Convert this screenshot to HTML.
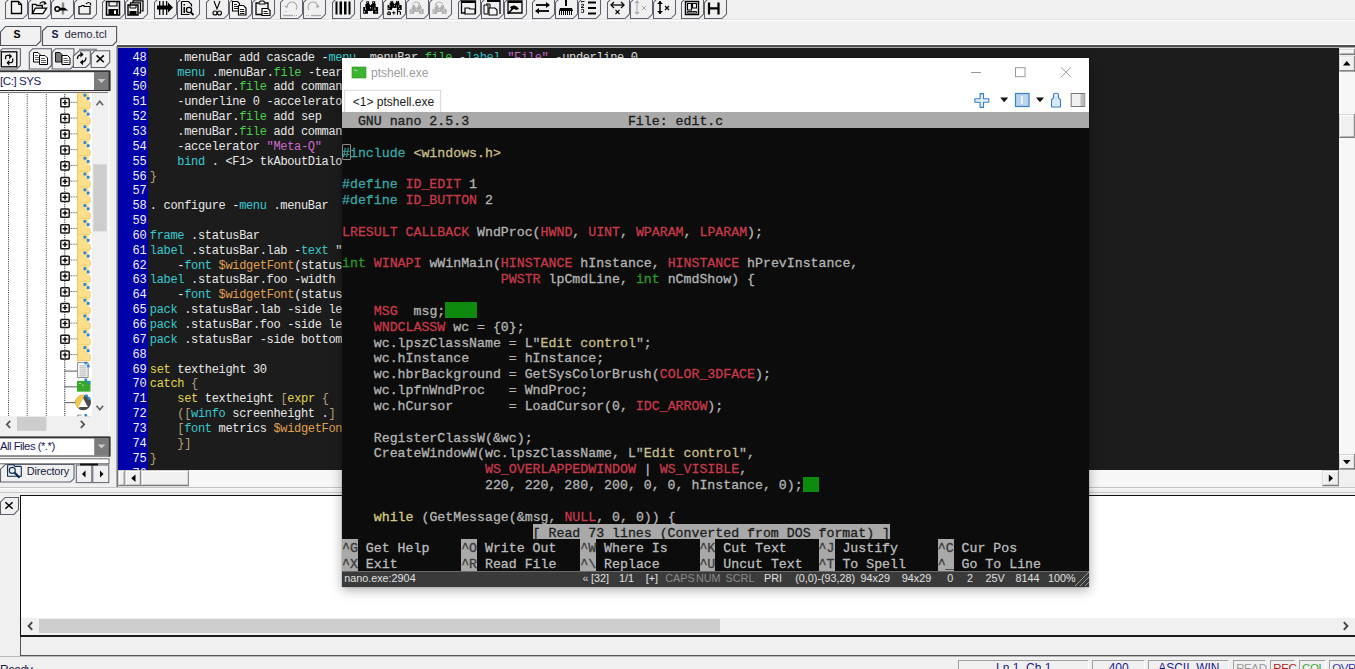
<!DOCTYPE html>
<html><head><meta charset="utf-8"><style>
html,body{margin:0;padding:0}
body{width:1355px;height:669px;overflow:hidden;position:relative;background:#f0f0f0;font-family:"Liberation Sans",sans-serif}
.a{position:absolute}
.mono{font-family:"Liberation Mono",monospace;white-space:pre}
</style></head><body>
<svg width="740" height="22" style="position:absolute;left:0;top:0">
<polygon points="5.5,18.5 5.5,2.5 8.5,-0.5 27.5,-0.5 27.5,14.0 23.0,18.5" fill="#f0f0f0" stroke="#5e626e" stroke-width="1.05"/>
<g transform="translate(5,0)"><path d="M6.5,1.5 h7 l3,3 v9 h-10z" fill="#f4f4f4" stroke="#000" stroke-width="1.3"/><path d="M13.5,1.5 v3 h3" fill="none" stroke="#000" stroke-width="1"/></g>
<polygon points="28.5,18.5 28.5,2.5 31.5,-0.5 50.5,-0.5 50.5,14.0 46.0,18.5" fill="#f0f0f0" stroke="#5e626e" stroke-width="1.05"/>
<g transform="translate(28,0)"><path d="M4.4,13.6 V4.4 h3.4 l1.1,1.1 h5.4 v2.6" fill="none" stroke="#000" stroke-width="1.3"/><path d="M4.4,13.6 l3,-5.4 h11.2 l-3.6,5.4z" fill="#fff" stroke="#000" stroke-width="1.3"/><path d="M11.8,3.6 q2.6,-2.8 5.6,-1" fill="none" stroke="#000" stroke-width="1.2"/><path d="M16.2,1.2 l2.8,2.8 -3.4,0.8z" fill="#000"/></g>
<polygon points="51.5,18.5 51.5,2.5 54.5,-0.5 73.5,-0.5 73.5,14.0 69.0,18.5" fill="#f0f0f0" stroke="#5e626e" stroke-width="1.05"/>
<g transform="translate(51,0)"><rect x="10.8" y="2.5" width="2.4" height="12" fill="#8a8a8a"/><circle cx="6.3" cy="9" r="2.3" fill="none" stroke="#000" stroke-width="1.5"/><path d="M8.6,7.8 h5 l3.6,2.6 h-8.6z" fill="#000"/></g>
<polygon points="74.5,18.5 74.5,2.5 77.5,-0.5 96.5,-0.5 96.5,14.0 92.0,18.5" fill="#f0f0f0" stroke="#5e626e" stroke-width="1.05"/>
<g transform="translate(74,0)"><path d="M5,14 v-7.5 h2 l1,-1 h2 v1 h6 v7.5z" fill="none" stroke="#000" stroke-width="1.2"/><path d="M12,4 q3,-3 5,0" fill="none" stroke="#000" stroke-width="1.1"/><path d="M16.5,3 l1,2.5 -2,-0.5z" fill="#000"/></g>
<polygon points="102.5,18.5 102.5,2.5 105.5,-0.5 124.5,-0.5 124.5,14.0 120.0,18.5" fill="#f0f0f0" stroke="#5e626e" stroke-width="1.05"/>
<g transform="translate(102,0)"><path d="M4.5,1.5 h13 v13.5 h-13z" fill="none" stroke="#000" stroke-width="1.5"/><path d="M7,1.5 v4.5 h8 v-4.5" fill="none" stroke="#000" stroke-width="1.1"/><rect x="6.5" y="9" width="9.5" height="6" fill="#000"/><rect x="12" y="10.5" width="2" height="3.5" fill="#fff"/></g>
<polygon points="125.5,18.5 125.5,2.5 128.5,-0.5 147.5,-0.5 147.5,14.0 143.0,18.5" fill="#f0f0f0" stroke="#5e626e" stroke-width="1.05"/>
<g transform="translate(125,0)"><path d="M8,3 v-2.2 h10 v10 h-1.5" fill="none" stroke="#000" stroke-width="1.2"/><path d="M5.5,5 v-2.2 h10 v10 h-1.5" fill="none" stroke="#000" stroke-width="1.2"/><path d="M3,5 h10 v10 h-10z" fill="#f0f0f0" stroke="#000" stroke-width="1.4"/><path d="M5,5 v3 h6 v-3" fill="none" stroke="#000" stroke-width="1"/><rect x="4.5" y="11" width="7" height="4" fill="#000"/></g>
<polygon points="154.5,18.5 154.5,2.5 157.5,-0.5 176.5,-0.5 176.5,14.0 172.0,18.5" fill="#f0f0f0" stroke="#5e626e" stroke-width="1.05"/>
<g transform="translate(154,0)"><path d="M3,5.5 h11 v-3 l5,5 -5,5 v-3 h-11z" fill="#000"/><rect x="5" y="1" width="1.3" height="14" fill="#000"/><rect x="8.5" y="1" width="1.3" height="14" fill="#000"/><rect x="12" y="1" width="1.3" height="14" fill="#000"/></g>
<polygon points="177.5,18.5 177.5,2.5 180.5,-0.5 199.5,-0.5 199.5,14.0 195.0,18.5" fill="#f0f0f0" stroke="#5e626e" stroke-width="1.05"/>
<g transform="translate(177,0)"><path d="M4.5,1.5 h7 l3,3 v2" fill="none" stroke="#000" stroke-width="1.2"/><path d="M4.5,1.5 v13 h8" fill="none" stroke="#000" stroke-width="1.2"/><rect x="6.5" y="4" width="1.5" height="1.5" fill="#000"/><rect x="6.5" y="7" width="1.5" height="6" fill="#000"/><circle cx="12" cy="10" r="2.6" fill="none" stroke="#000" stroke-width="1.3"/><path d="M13.5,12 l3,3" stroke="#000" stroke-width="1.8"/></g>
<polygon points="206.5,18.5 206.5,2.5 209.5,-0.5 228.5,-0.5 228.5,14.0 224.0,18.5" fill="#f0f0f0" stroke="#5e626e" stroke-width="1.05"/>
<g transform="translate(206,0)"><path d="M8,1 l3,8 3,-8" fill="none" stroke="#000" stroke-width="1.1"/><circle cx="9" cy="13" r="2" fill="none" stroke="#000" stroke-width="1.1"/><circle cx="13.5" cy="13" r="2" fill="none" stroke="#000" stroke-width="1.1"/></g>
<polygon points="229.5,18.5 229.5,2.5 232.5,-0.5 251.5,-0.5 251.5,14.0 247.0,18.5" fill="#f0f0f0" stroke="#5e626e" stroke-width="1.05"/>
<g transform="translate(229,0)"><path d="M3.5,1.5 h5 l2,2 v7.5 h-7z" fill="#fff" stroke="#000" stroke-width="1.1"/><path d="M5,4.5h3M5,6.5h4M5,8.5h4" stroke="#000" stroke-width="0.9"/><path d="M9.5,5.5 h5 l2.5,2.5 v7 h-7.5z" fill="#fff" stroke="#000" stroke-width="1.2"/><path d="M11,9.5h4M11,11.5h4.5M11,13.5h4.5" stroke="#000" stroke-width="0.9"/></g>
<polygon points="252.5,18.5 252.5,2.5 255.5,-0.5 274.5,-0.5 274.5,14.0 270.0,18.5" fill="#f0f0f0" stroke="#5e626e" stroke-width="1.05"/>
<g transform="translate(252,0)"><path d="M6.5,3 h-2.5 v11.5 h6" fill="none" stroke="#000" stroke-width="1.3"/><path d="M13.5,3 h2.5 v5" fill="none" stroke="#000" stroke-width="1.3"/><path d="M7,4 v-1.5 l1.5,-1.5 h3 l1.5,1.5 v1.5z" fill="#fff" stroke="#000" stroke-width="1.1"/><path d="M10,8.5 h6 l2,2 v5 h-8z" fill="#fff" stroke="#000" stroke-width="1.2"/><path d="M11.5,11.5h4M11.5,13.5h5" stroke="#000" stroke-width="0.9"/></g>
<polygon points="280.5,18.5 280.5,2.5 283.5,-0.5 302.5,-0.5 302.5,14.0 298.0,18.5" fill="#f0f0f0" stroke="#5e626e" stroke-width="1.05"/>
<g transform="translate(280,0)"><path d="M6,12 v-1 M16,10 a5,5 0 1 0 -9,-3" fill="none" stroke="#aaa" stroke-width="1.1"/><path d="M4,6 l3,2.5 1,-3z" fill="#aaa"/><path d="M3,15.5 h10" stroke="#aaa" stroke-width="1.3"/><path d="M14,15.5 h3" stroke="#aaa" stroke-width="1" stroke-dasharray="1,1"/></g>
<polygon points="303.5,18.5 303.5,2.5 306.5,-0.5 325.5,-0.5 325.5,14.0 321.0,18.5" fill="#f0f0f0" stroke="#5e626e" stroke-width="1.05"/>
<g transform="translate(303,0)"><path d="M6,10 a5,5 0 1 1 9,-3" fill="none" stroke="#aaa" stroke-width="1.1"/><path d="M17,6 l-3,2.5 -1,-3z" fill="#aaa"/><path d="M8,15.5 h10" stroke="#aaa" stroke-width="1.3"/><path d="M3,15.5 h4" stroke="#aaa" stroke-width="1" stroke-dasharray="1,1"/></g>
<polygon points="332.5,18.5 332.5,2.5 335.5,-0.5 354.5,-0.5 354.5,14.0 350.0,18.5" fill="#f0f0f0" stroke="#5e626e" stroke-width="1.05"/>
<g transform="translate(332,0)"><rect x="3.5" y="1.5" width="2" height="13" fill="#000"/><rect x="7.5" y="1.5" width="2.5" height="13" fill="#000"/><rect x="12" y="1.5" width="2.5" height="13" fill="#000"/><rect x="16.5" y="1.5" width="2" height="13" fill="#000"/></g>
<polygon points="360.5,18.5 360.5,2.5 363.5,-0.5 382.5,-0.5 382.5,14.0 378.0,18.5" fill="#f0f0f0" stroke="#5e626e" stroke-width="1.05"/>
<g transform="translate(360,0)"><g fill="#000"><rect x="3.2" y="7" width="4.8" height="6.8"/><rect x="5.4" y="3.9" width="4.4" height="3.3"/><rect x="6.3" y="1.3" width="2.8" height="2.8"/><rect x="8" y="5.2" width="4.8" height="5.8"/><rect x="12.2" y="1.3" width="3" height="2.8"/><rect x="11.3" y="3.9" width="4.4" height="3.3"/><rect x="13" y="7" width="5.1" height="6.8"/></g><g fill="#f0f0f0"><rect x="5.1" y="7.5" width="0.8" height="2.2"/><rect x="4.2" y="11" width="0.8" height="1.6"/><rect x="10" y="7" width="0.8" height="1.5"/><rect x="14.6" y="7.5" width="0.8" height="2.2"/><rect x="15.6" y="11" width="0.8" height="1.6"/><rect x="7.3" y="2" width="0.8" height="0.8"/><rect x="13.2" y="2" width="0.8" height="0.8"/></g></g>
<polygon points="383.5,18.5 383.5,2.5 386.5,-0.5 405.5,-0.5 405.5,14.0 401.0,18.5" fill="#f0f0f0" stroke="#5e626e" stroke-width="1.05"/>
<g transform="translate(383,0)"><g transform="translate(1.5,0) scale(0.95,0.72)"><g fill="#000"><rect x="3.2" y="7" width="4.8" height="6.8"/><rect x="5.4" y="3.9" width="4.4" height="3.3"/><rect x="6.3" y="1.3" width="2.8" height="2.8"/><rect x="8" y="5.2" width="4.8" height="5.8"/><rect x="12.2" y="1.3" width="3" height="2.8"/><rect x="11.3" y="3.9" width="4.4" height="3.3"/><rect x="13" y="7" width="5.1" height="6.8"/></g><g fill="#f0f0f0"><rect x="5.1" y="7.5" width="0.8" height="2.2"/><rect x="4.2" y="11" width="0.8" height="1.6"/><rect x="10" y="7" width="0.8" height="1.5"/><rect x="14.6" y="7.5" width="0.8" height="2.2"/><rect x="15.6" y="11" width="0.8" height="1.6"/><rect x="7.3" y="2" width="0.8" height="0.8"/><rect x="13.2" y="2" width="0.8" height="0.8"/></g></g><path d="M4.5,12.3 q1.5,-1.2 3,0 v2.3 h-2.5 q-0.8,0 -0.8,-0.8 q0,-0.8 0.8,-0.8 h2.5" fill="none" stroke="#000" stroke-width="1"/><path d="M9.2,12.8 h3.2 M10.8,11.2 v3.2" stroke="#000" stroke-width="1.1"/><path d="M14.5,9.8 v5 M14.5,12 q0,-0.8 1.5,-0.8 q1.4,0 1.4,1 v2.6" fill="none" stroke="#000" stroke-width="1.1"/></g>
<polygon points="406.5,18.5 406.5,2.5 409.5,-0.5 428.5,-0.5 428.5,14.0 424.0,18.5" fill="#f0f0f0" stroke="#5e626e" stroke-width="1.05"/>
<g transform="translate(406,0)"><g transform="translate(0.5,4) scale(0.95,0.72)"><g fill="#b0b0b0"><rect x="3.2" y="7" width="4.8" height="6.8"/><rect x="5.4" y="3.9" width="4.4" height="3.3"/><rect x="6.3" y="1.3" width="2.8" height="2.8"/><rect x="8" y="5.2" width="4.8" height="5.8"/><rect x="12.2" y="1.3" width="3" height="2.8"/><rect x="11.3" y="3.9" width="4.4" height="3.3"/><rect x="13" y="7" width="5.1" height="6.8"/></g><g fill="#f0f0f0"><rect x="5.1" y="7.5" width="0.8" height="2.2"/><rect x="4.2" y="11" width="0.8" height="1.6"/><rect x="10" y="7" width="0.8" height="1.5"/><rect x="14.6" y="7.5" width="0.8" height="2.2"/><rect x="15.6" y="11" width="0.8" height="1.6"/><rect x="7.3" y="2" width="0.8" height="0.8"/><rect x="13.2" y="2" width="0.8" height="0.8"/></g></g><path d="M6.5,4 q3.5,-4 7.5,0" fill="none" stroke="#b0b0b0" stroke-width="1"/><path d="M13,2.5 l1.5,2 -2.2,0.3z" fill="#b0b0b0"/></g>
<polygon points="429.5,18.5 429.5,2.5 432.5,-0.5 451.5,-0.5 451.5,14.0 447.0,18.5" fill="#f0f0f0" stroke="#5e626e" stroke-width="1.05"/>
<g transform="translate(429,0)"><g transform="translate(0.5,4) scale(0.95,0.72)"><g fill="#b0b0b0"><rect x="3.2" y="7" width="4.8" height="6.8"/><rect x="5.4" y="3.9" width="4.4" height="3.3"/><rect x="6.3" y="1.3" width="2.8" height="2.8"/><rect x="8" y="5.2" width="4.8" height="5.8"/><rect x="12.2" y="1.3" width="3" height="2.8"/><rect x="11.3" y="3.9" width="4.4" height="3.3"/><rect x="13" y="7" width="5.1" height="6.8"/></g><g fill="#f0f0f0"><rect x="5.1" y="7.5" width="0.8" height="2.2"/><rect x="4.2" y="11" width="0.8" height="1.6"/><rect x="10" y="7" width="0.8" height="1.5"/><rect x="14.6" y="7.5" width="0.8" height="2.2"/><rect x="15.6" y="11" width="0.8" height="1.6"/><rect x="7.3" y="2" width="0.8" height="0.8"/><rect x="13.2" y="2" width="0.8" height="0.8"/></g></g><path d="M6.5,4 q3.5,-4 7.5,0" fill="none" stroke="#b0b0b0" stroke-width="1"/><path d="M7,2.5 l-1.5,2 2.2,0.3z" fill="#b0b0b0"/></g>
<polygon points="458.5,18.5 458.5,2.5 461.5,-0.5 480.5,-0.5 480.5,14.0 476.0,18.5" fill="#f0f0f0" stroke="#5e626e" stroke-width="1.05"/>
<g transform="translate(458,0)"><path d="M3.5,1 h14 v12 h-14z" fill="none" stroke="#000" stroke-width="1.3"/><rect x="3.5" y="1" width="14" height="2" fill="#000"/><path d="M7,14 v-6 h4 l1,1 h5 v5z" fill="#f4f4f4" stroke="#000" stroke-width="1.2"/></g>
<polygon points="481.5,18.5 481.5,2.5 484.5,-0.5 503.5,-0.5 503.5,14.0 499.0,18.5" fill="#f0f0f0" stroke="#5e626e" stroke-width="1.05"/>
<g transform="translate(481,0)"><path d="M6,0 h13 v14" fill="none" stroke="#000" stroke-width="1.3"/><rect x="6" y="-1" width="13" height="3" fill="#000"/><path d="M3,5 h4 v9 h-4z M5,4 h4 v9" fill="none" stroke="#000" stroke-width="1"/><path d="M8,8 h6 l2,2 v5 h-8z" fill="#f4f4f4" stroke="#000" stroke-width="1.1"/></g>
<polygon points="504.5,18.5 504.5,2.5 507.5,-0.5 526.5,-0.5 526.5,14.0 522.0,18.5" fill="#f0f0f0" stroke="#5e626e" stroke-width="1.05"/>
<g transform="translate(504,0)"><path d="M4,1 h14 v12 h-14z" fill="none" stroke="#000" stroke-width="1.3"/><rect x="4" y="1" width="14" height="2" fill="#000"/><path d="M6,7 q5,-4 9,2 l-3,1 q-2,-2 -4,0z" fill="#000"/><path d="M9,8 l-5,6" stroke="#000" stroke-width="1.6"/></g>
<polygon points="532.5,18.5 532.5,2.5 535.5,-0.5 554.5,-0.5 554.5,14.0 550.0,18.5" fill="#f0f0f0" stroke="#5e626e" stroke-width="1.05"/>
<g transform="translate(532,0)"><path d="M4,5 h11" stroke="#000" stroke-width="1.8"/><path d="M14,2 l4,3 -4,3z" fill="#000"/><path d="M6,11 h11" stroke="#000" stroke-width="1.8"/><path d="M7,8 l-4,3 4,3z" fill="#000"/></g>
<polygon points="555.5,18.5 555.5,2.5 558.5,-0.5 577.5,-0.5 577.5,14.0 573.0,18.5" fill="#f0f0f0" stroke="#5e626e" stroke-width="1.05"/>
<g transform="translate(555,0)"><rect x="10" y="0" width="2" height="6" fill="#000"/><path d="M5,8 h12 l1,3 h-14z" fill="#000"/><path d="M4.5,11 v4 M6.5,11 v4 M8.5,11 v4 M10.5,11 v4 M12.5,11 v4 M14.5,11 v4 M16.5,11 v4" stroke="#000" stroke-width="1"/></g>
<polygon points="578.5,18.5 578.5,2.5 581.5,-0.5 600.5,-0.5 600.5,14.0 596.0,18.5" fill="#f0f0f0" stroke="#5e626e" stroke-width="1.05"/>
<g transform="translate(578,0)"><path d="M10,2.5 h8 M10,8 h8 M10,13.5 h8" stroke="#000" stroke-width="2"/><path d="M3.5,1.5 h3 M3.5,1.5 v1" stroke="#000" stroke-width="0.9"/><path d="M3,5 q1.5,-1.5 3,0 l-3,2.5 h3" fill="none" stroke="#000" stroke-width="0.9"/><path d="M3,10 q1.5,-1.2 3,0 q-1.5,1 0,2 q-1.5,1.3 -3,0" fill="none" stroke="#000" stroke-width="0.9"/></g>
<polygon points="607.5,18.5 607.5,2.5 610.5,-0.5 629.5,-0.5 629.5,14.0 625.0,18.5" fill="#f0f0f0" stroke="#5e626e" stroke-width="1.05"/>
<g transform="translate(607,0)"><path d="M4,5 h13" stroke="#000" stroke-width="1.3"/><path d="M7,2 l-3,3 3,3 M14,2 l3,3 -3,3" fill="none" stroke="#000" stroke-width="1.3"/><path d="M8.5,10 l4,4 M12.5,10 l-4,4" stroke="#000" stroke-width="1.1"/></g>
<polygon points="630.5,18.5 630.5,2.5 633.5,-0.5 652.5,-0.5 652.5,14.0 648.0,18.5" fill="#f0f0f0" stroke="#5e626e" stroke-width="1.05"/>
<g transform="translate(630,0)"><path d="M7,1 v13 M5,3 l2,-2 2,2 M5,12 l2,2 2,-2" fill="none" stroke="#aaa" stroke-width="1.1"/><path d="M12,6 l4,4 M16,6 l-4,4" stroke="#aaa" stroke-width="1"/></g>
<polygon points="653.5,18.5 653.5,2.5 656.5,-0.5 675.5,-0.5 675.5,14.0 671.0,18.5" fill="#f0f0f0" stroke="#5e626e" stroke-width="1.05"/>
<g transform="translate(653,0)"><path d="M7,1 v13" stroke="#000" stroke-width="1.5"/><path d="M4,4 l3,-3 3,3z M4,11 l3,3 3,-3z" fill="#000"/><path d="M12,6 l4,4 M16,6 l-4,4" stroke="#000" stroke-width="1.1"/></g>
<polygon points="681.5,18.5 681.5,2.5 684.5,-0.5 703.5,-0.5 703.5,14.0 699.0,18.5" fill="#f0f0f0" stroke="#5e626e" stroke-width="1.05"/>
<g transform="translate(681,0)"><path d="M4.5,1.5 h13 v13 h-13z" fill="none" stroke="#000" stroke-width="1.4"/><path d="M6.5,3.5 h4 v6.5 h-4z M11.5,3.5 h4 v4.5 h-4z" fill="none" stroke="#000" stroke-width="1.1"/><path d="M6.5,11.5 h9 v1.5 h-9z" fill="none" stroke="#000" stroke-width="0.9"/></g>
<polygon points="704.5,18.5 704.5,2.5 707.5,-0.5 726.5,-0.5 726.5,14.0 722.0,18.5" fill="#f0f0f0" stroke="#5e626e" stroke-width="1.05"/>
<g transform="translate(704,0)"><path d="M5,2.5 v12 M14.5,2.5 v12 M5,8.3 h9.5" stroke="#000" stroke-width="2.2"/></g>
</svg>
<div style="position:absolute;left:0;top:19px;width:1355px;height:1px;background:#e2e2e2"></div>
<div style="position:absolute;left:0;top:20px;width:1355px;height:1px;background:#fff"></div>
<svg width="130" height="48" style="position:absolute;left:0;top:0">
<polygon points="0.5,45.5 0.5,32 5.5,26.5 40.8,26.5 40.8,41 36.3,45.5" fill="#f0f0f0" stroke="#50545e" stroke-width="1.1"/>
<polygon points="42.5,45.5 42.5,31 47,26.5 116.6,26.5 116.6,41.5 112.6,45.5" fill="#f0f0f0" stroke="#50545e" stroke-width="1.1"/>
<text x="13.6" y="37.5" font-family="Liberation Sans" font-weight="bold" font-size="10.5" fill="#000">S</text>
<text x="51.5" y="37.5" font-family="Liberation Sans" font-weight="bold" font-size="10.5" fill="#102050">S</text>
<text x="64.5" y="37.6" font-family="Liberation Sans" font-size="11.2" fill="#2a2a40">demo.tcl</text>
</svg>
<svg width="118" height="492" style="position:absolute;left:0;top:0">
<polygon points="-1,69 -1,52.2 2.5,48.7 20.4,48.7 20.4,65.5 16.9,69" fill="#f0f0f0" stroke="#5e626e" stroke-width="1.1"/>
<rect x="1.3" y="51.8" width="15.5" height="15" fill="none" stroke="#000" stroke-width="1.3"/>
<path d="M5.6,59.3 v-2.2 q0,-1.7 1.8,-1.7 h2" fill="none" stroke="#000" stroke-width="1.3"/><path d="M9.2,53.4 l2.9,2.9 -2.9,2.9z" fill="#000"/><path d="M12.7,58.6 v2.3 q0,1.7 -1.8,1.7 h-2" fill="none" stroke="#000" stroke-width="1.3"/><path d="M9.3,59.9 l-2.9,2.9 2.9,2.9z" fill="#000"/>
<polygon points="29.3,69 29.3,52.2 32.8,48.7 51.4,48.7 51.4,65.5 47.9,69" fill="#f0f0f0" stroke="#5e626e" stroke-width="1.1"/>
<path d="M33.5,52.5 h4.5 l2,2 v7.5 h-6.5z" fill="#fff" stroke="#000" stroke-width="1"/><path d="M35,55.5h3M35,57.5h4M35,59.5h4" stroke="#333" stroke-width="0.8"/><path d="M39.5,55.5 h5.5 l2.5,2.5 v6.5 h-8z" fill="#fff" stroke="#000" stroke-width="1"/><path d="M41,58.5h4M41,60.5h5M41,62.5h5" stroke="#333" stroke-width="0.8"/>
<polygon points="52.2,69 52.2,52.2 55.7,48.7 73.9,48.7 73.9,65.5 70.4,69" fill="#f0f0f0" stroke="#5e626e" stroke-width="1.1"/>
<path d="M55.5,52.5 h4.5 l2,2 v7.5 h-6.5z" fill="#777" stroke="#111" stroke-width="1"/><path d="M62,55.5 h5.5 l2.5,2.5 v6.5 h-8z" fill="#fff" stroke="#000" stroke-width="1"/><path d="M63.5,58.5h4M63.5,60.5h5M63.5,62.5h5" stroke="#333" stroke-width="0.8"/>
<polygon points="73.3,67.5 73.3,56 79.3,50.8 90.3,50.8 90.3,63 85.8,67.5" fill="#f0f0f0" stroke="#5e626e" stroke-width="1.1"/>
<rect x="79" y="48.6" width="18" height="2.2" fill="#8a8c94"/>
<path d="M77.4,59 q0,-3.6 3.4,-4.4" fill="none" stroke="#000" stroke-width="1.3"/><path d="M80.4,51.6 l3.2,2.9 -3.2,2.9z" fill="#000"/><path d="M86,57.6 q0,3.6 -3.4,4.6" fill="none" stroke="#000" stroke-width="1.3"/><path d="M83,59.4 l-3.2,2.9 3.2,2.9z" fill="#000"/>
<polygon points="91.2,67.5 91.2,54.3 94.8,50.7 109.7,50.7 109.7,62.5 104.7,67.5" fill="#f0f0f0" stroke="#5e626e" stroke-width="1.1"/>
<path d="M96.6,55.4 l7.2,6.8 M103.8,55.4 l-7.2,6.8" stroke="#000" stroke-width="1.5"/>
<rect x="-1" y="71" width="111" height="19.5" fill="#fff" stroke="#2a2a2a" stroke-width="1"/>
<rect x="-1" y="70.6" width="111" height="1.6" fill="#333"/>
<rect x="94" y="72" width="15.5" height="18" fill="#7b7b7b"/>
<path d="M97.5,79 h8 l-4,4z" fill="#c8c8c8"/>
<rect x="108.6" y="71" width="1.5" height="20" fill="#333"/>
<rect x="0" y="92" width="108" height="1.2" fill="#777"/>
<rect x="0" y="93.2" width="92" height="323" fill="#fff"/>
<line x1="8.5" y1="94" x2="8.5" y2="416" stroke="#222" stroke-width="0.9" stroke-dasharray="1,1.2"/>
<line x1="27.2" y1="94" x2="27.2" y2="416" stroke="#222" stroke-width="0.9" stroke-dasharray="1,1.2"/>
<line x1="46.3" y1="94" x2="46.3" y2="416" stroke="#222" stroke-width="0.9" stroke-dasharray="1,1.2"/>
<line x1="64.8" y1="94" x2="64.8" y2="416" stroke="#222" stroke-width="1" stroke-dasharray="1.2,1"/>
<line x1="69.5" y1="102.3" x2="77" y2="102.3" stroke="#444" stroke-width="0.8" stroke-dasharray="1,0.6"/>
<rect x="60.8" y="98.6" width="8.4" height="8.2" rx="0.8" fill="#fff" stroke="#1a1a1a" stroke-width="1.5"/>
<path d="M62.6,102.6 h4.8 M65,100.1 v5" stroke="#000" stroke-width="1.4"/>
<path d="M77.2,93.0 h11.5 v15.8 h-11.5z" fill="#fbdf8c"/>
<path d="M77.6,93.0 v15.8" stroke="#f1c75a" stroke-width="1"/>
<path d="M77.2,108.3 h11.8" stroke="#f0c860" stroke-width="0.9"/>
<path d="M88.6,102.0 q1.6,0 1.6,2 v3 q0,1.5 -1.6,1.5" fill="#fbdc80" stroke="#efc252" stroke-width="0.8"/>
<rect x="83.5" y="93.8" width="2.8" height="2.8" fill="#2a84d8"/><rect x="86.8" y="97.0" width="2.8" height="2.8" fill="#2a84d8"/>
<line x1="69.5" y1="118.07" x2="77" y2="118.07" stroke="#444" stroke-width="0.8" stroke-dasharray="1,0.6"/>
<rect x="60.8" y="114.36999999999999" width="8.4" height="8.2" rx="0.8" fill="#fff" stroke="#1a1a1a" stroke-width="1.5"/>
<path d="M62.6,118.36999999999999 h4.8 M65,115.86999999999999 v5" stroke="#000" stroke-width="1.4"/>
<path d="M77.2,108.77 h11.5 v15.8 h-11.5z" fill="#fbdf8c"/>
<path d="M77.6,108.77 v15.8" stroke="#f1c75a" stroke-width="1"/>
<path d="M77.2,124.07 h11.8" stroke="#f0c860" stroke-width="0.9"/>
<path d="M88.6,117.77 q1.6,0 1.6,2 v3 q0,1.5 -1.6,1.5" fill="#fbdc80" stroke="#efc252" stroke-width="0.8"/>
<rect x="83.5" y="109.57" width="2.8" height="2.8" fill="#2a84d8"/><rect x="86.8" y="112.77" width="2.8" height="2.8" fill="#2a84d8"/>
<line x1="69.5" y1="133.84" x2="77" y2="133.84" stroke="#444" stroke-width="0.8" stroke-dasharray="1,0.6"/>
<rect x="60.8" y="130.14000000000001" width="8.4" height="8.2" rx="0.8" fill="#fff" stroke="#1a1a1a" stroke-width="1.5"/>
<path d="M62.6,134.14000000000001 h4.8 M65,131.64000000000001 v5" stroke="#000" stroke-width="1.4"/>
<path d="M77.2,124.54 h11.5 v15.8 h-11.5z" fill="#fbdf8c"/>
<path d="M77.6,124.54 v15.8" stroke="#f1c75a" stroke-width="1"/>
<path d="M77.2,139.84 h11.8" stroke="#f0c860" stroke-width="0.9"/>
<path d="M88.6,133.54000000000002 q1.6,0 1.6,2 v3 q0,1.5 -1.6,1.5" fill="#fbdc80" stroke="#efc252" stroke-width="0.8"/>
<rect x="83.5" y="125.34" width="2.8" height="2.8" fill="#2a84d8"/><rect x="86.8" y="128.54000000000002" width="2.8" height="2.8" fill="#2a84d8"/>
<line x1="69.5" y1="149.61" x2="77" y2="149.61" stroke="#444" stroke-width="0.8" stroke-dasharray="1,0.6"/>
<rect x="60.8" y="145.91000000000003" width="8.4" height="8.2" rx="0.8" fill="#fff" stroke="#1a1a1a" stroke-width="1.5"/>
<path d="M62.6,149.91000000000003 h4.8 M65,147.41000000000003 v5" stroke="#000" stroke-width="1.4"/>
<path d="M77.2,140.31 h11.5 v15.8 h-11.5z" fill="#fbdf8c"/>
<path d="M77.6,140.31 v15.8" stroke="#f1c75a" stroke-width="1"/>
<path d="M77.2,155.61 h11.8" stroke="#f0c860" stroke-width="0.9"/>
<path d="M88.6,149.31 q1.6,0 1.6,2 v3 q0,1.5 -1.6,1.5" fill="#fbdc80" stroke="#efc252" stroke-width="0.8"/>
<rect x="83.5" y="141.11" width="2.8" height="2.8" fill="#2a84d8"/><rect x="86.8" y="144.31" width="2.8" height="2.8" fill="#2a84d8"/>
<line x1="69.5" y1="165.38" x2="77" y2="165.38" stroke="#444" stroke-width="0.8" stroke-dasharray="1,0.6"/>
<rect x="60.8" y="161.68" width="8.4" height="8.2" rx="0.8" fill="#fff" stroke="#1a1a1a" stroke-width="1.5"/>
<path d="M62.6,165.68 h4.8 M65,163.18 v5" stroke="#000" stroke-width="1.4"/>
<path d="M77.2,156.07999999999998 h11.5 v15.8 h-11.5z" fill="#fbdf8c"/>
<path d="M77.6,156.07999999999998 v15.8" stroke="#f1c75a" stroke-width="1"/>
<path d="M77.2,171.38 h11.8" stroke="#f0c860" stroke-width="0.9"/>
<path d="M88.6,165.07999999999998 q1.6,0 1.6,2 v3 q0,1.5 -1.6,1.5" fill="#fbdc80" stroke="#efc252" stroke-width="0.8"/>
<rect x="83.5" y="156.88" width="2.8" height="2.8" fill="#2a84d8"/><rect x="86.8" y="160.07999999999998" width="2.8" height="2.8" fill="#2a84d8"/>
<line x1="69.5" y1="181.14999999999998" x2="77" y2="181.14999999999998" stroke="#444" stroke-width="0.8" stroke-dasharray="1,0.6"/>
<rect x="60.8" y="177.45" width="8.4" height="8.2" rx="0.8" fill="#fff" stroke="#1a1a1a" stroke-width="1.5"/>
<path d="M62.6,181.45 h4.8 M65,178.95 v5" stroke="#000" stroke-width="1.4"/>
<path d="M77.2,171.84999999999997 h11.5 v15.8 h-11.5z" fill="#fbdf8c"/>
<path d="M77.6,171.84999999999997 v15.8" stroke="#f1c75a" stroke-width="1"/>
<path d="M77.2,187.14999999999998 h11.8" stroke="#f0c860" stroke-width="0.9"/>
<path d="M88.6,180.84999999999997 q1.6,0 1.6,2 v3 q0,1.5 -1.6,1.5" fill="#fbdc80" stroke="#efc252" stroke-width="0.8"/>
<rect x="83.5" y="172.64999999999998" width="2.8" height="2.8" fill="#2a84d8"/><rect x="86.8" y="175.84999999999997" width="2.8" height="2.8" fill="#2a84d8"/>
<line x1="69.5" y1="196.92000000000002" x2="77" y2="196.92000000000002" stroke="#444" stroke-width="0.8" stroke-dasharray="1,0.6"/>
<rect x="60.8" y="193.22000000000003" width="8.4" height="8.2" rx="0.8" fill="#fff" stroke="#1a1a1a" stroke-width="1.5"/>
<path d="M62.6,197.22000000000003 h4.8 M65,194.72000000000003 v5" stroke="#000" stroke-width="1.4"/>
<path d="M77.2,187.62 h11.5 v15.8 h-11.5z" fill="#fbdf8c"/>
<path d="M77.6,187.62 v15.8" stroke="#f1c75a" stroke-width="1"/>
<path d="M77.2,202.92000000000002 h11.8" stroke="#f0c860" stroke-width="0.9"/>
<path d="M88.6,196.62 q1.6,0 1.6,2 v3 q0,1.5 -1.6,1.5" fill="#fbdc80" stroke="#efc252" stroke-width="0.8"/>
<rect x="83.5" y="188.42000000000002" width="2.8" height="2.8" fill="#2a84d8"/><rect x="86.8" y="191.62" width="2.8" height="2.8" fill="#2a84d8"/>
<line x1="69.5" y1="212.69" x2="77" y2="212.69" stroke="#444" stroke-width="0.8" stroke-dasharray="1,0.6"/>
<rect x="60.8" y="208.99" width="8.4" height="8.2" rx="0.8" fill="#fff" stroke="#1a1a1a" stroke-width="1.5"/>
<path d="M62.6,212.99 h4.8 M65,210.49 v5" stroke="#000" stroke-width="1.4"/>
<path d="M77.2,203.39 h11.5 v15.8 h-11.5z" fill="#fbdf8c"/>
<path d="M77.6,203.39 v15.8" stroke="#f1c75a" stroke-width="1"/>
<path d="M77.2,218.69 h11.8" stroke="#f0c860" stroke-width="0.9"/>
<path d="M88.6,212.39 q1.6,0 1.6,2 v3 q0,1.5 -1.6,1.5" fill="#fbdc80" stroke="#efc252" stroke-width="0.8"/>
<rect x="83.5" y="204.19" width="2.8" height="2.8" fill="#2a84d8"/><rect x="86.8" y="207.39" width="2.8" height="2.8" fill="#2a84d8"/>
<line x1="69.5" y1="228.45999999999998" x2="77" y2="228.45999999999998" stroke="#444" stroke-width="0.8" stroke-dasharray="1,0.6"/>
<rect x="60.8" y="224.76" width="8.4" height="8.2" rx="0.8" fill="#fff" stroke="#1a1a1a" stroke-width="1.5"/>
<path d="M62.6,228.76 h4.8 M65,226.26 v5" stroke="#000" stroke-width="1.4"/>
<path d="M77.2,219.15999999999997 h11.5 v15.8 h-11.5z" fill="#fbdf8c"/>
<path d="M77.6,219.15999999999997 v15.8" stroke="#f1c75a" stroke-width="1"/>
<path d="M77.2,234.45999999999998 h11.8" stroke="#f0c860" stroke-width="0.9"/>
<path d="M88.6,228.15999999999997 q1.6,0 1.6,2 v3 q0,1.5 -1.6,1.5" fill="#fbdc80" stroke="#efc252" stroke-width="0.8"/>
<rect x="83.5" y="219.95999999999998" width="2.8" height="2.8" fill="#2a84d8"/><rect x="86.8" y="223.15999999999997" width="2.8" height="2.8" fill="#2a84d8"/>
<line x1="69.5" y1="244.23000000000002" x2="77" y2="244.23000000000002" stroke="#444" stroke-width="0.8" stroke-dasharray="1,0.6"/>
<rect x="60.8" y="240.53000000000003" width="8.4" height="8.2" rx="0.8" fill="#fff" stroke="#1a1a1a" stroke-width="1.5"/>
<path d="M62.6,244.53000000000003 h4.8 M65,242.03000000000003 v5" stroke="#000" stroke-width="1.4"/>
<path d="M77.2,234.93 h11.5 v15.8 h-11.5z" fill="#fbdf8c"/>
<path d="M77.6,234.93 v15.8" stroke="#f1c75a" stroke-width="1"/>
<path d="M77.2,250.23000000000002 h11.8" stroke="#f0c860" stroke-width="0.9"/>
<path d="M88.6,243.93 q1.6,0 1.6,2 v3 q0,1.5 -1.6,1.5" fill="#fbdc80" stroke="#efc252" stroke-width="0.8"/>
<rect x="83.5" y="235.73000000000002" width="2.8" height="2.8" fill="#2a84d8"/><rect x="86.8" y="238.93" width="2.8" height="2.8" fill="#2a84d8"/>
<line x1="69.5" y1="260.0" x2="77" y2="260.0" stroke="#444" stroke-width="0.8" stroke-dasharray="1,0.6"/>
<rect x="60.8" y="256.3" width="8.4" height="8.2" rx="0.8" fill="#fff" stroke="#1a1a1a" stroke-width="1.5"/>
<path d="M62.6,260.3 h4.8 M65,257.8 v5" stroke="#000" stroke-width="1.4"/>
<path d="M77.2,250.7 h11.5 v15.8 h-11.5z" fill="#fbdf8c"/>
<path d="M77.6,250.7 v15.8" stroke="#f1c75a" stroke-width="1"/>
<path d="M77.2,266.0 h11.8" stroke="#f0c860" stroke-width="0.9"/>
<path d="M88.6,259.7 q1.6,0 1.6,2 v3 q0,1.5 -1.6,1.5" fill="#fbdc80" stroke="#efc252" stroke-width="0.8"/>
<rect x="83.5" y="251.5" width="2.8" height="2.8" fill="#2a84d8"/><rect x="86.8" y="254.7" width="2.8" height="2.8" fill="#2a84d8"/>
<line x1="69.5" y1="275.77" x2="77" y2="275.77" stroke="#444" stroke-width="0.8" stroke-dasharray="1,0.6"/>
<rect x="60.8" y="272.07" width="8.4" height="8.2" rx="0.8" fill="#fff" stroke="#1a1a1a" stroke-width="1.5"/>
<path d="M62.6,276.07 h4.8 M65,273.57 v5" stroke="#000" stroke-width="1.4"/>
<path d="M77.2,266.46999999999997 h11.5 v15.8 h-11.5z" fill="#fbdf8c"/>
<path d="M77.6,266.46999999999997 v15.8" stroke="#f1c75a" stroke-width="1"/>
<path d="M77.2,281.77 h11.8" stroke="#f0c860" stroke-width="0.9"/>
<path d="M88.6,275.46999999999997 q1.6,0 1.6,2 v3 q0,1.5 -1.6,1.5" fill="#fbdc80" stroke="#efc252" stroke-width="0.8"/>
<rect x="83.5" y="267.27" width="2.8" height="2.8" fill="#2a84d8"/><rect x="86.8" y="270.46999999999997" width="2.8" height="2.8" fill="#2a84d8"/>
<line x1="69.5" y1="291.54" x2="77" y2="291.54" stroke="#444" stroke-width="0.8" stroke-dasharray="1,0.6"/>
<rect x="60.8" y="287.84000000000003" width="8.4" height="8.2" rx="0.8" fill="#fff" stroke="#1a1a1a" stroke-width="1.5"/>
<path d="M62.6,291.84000000000003 h4.8 M65,289.34000000000003 v5" stroke="#000" stroke-width="1.4"/>
<path d="M77.2,282.24 h11.5 v15.8 h-11.5z" fill="#fbdf8c"/>
<path d="M77.6,282.24 v15.8" stroke="#f1c75a" stroke-width="1"/>
<path d="M77.2,297.54 h11.8" stroke="#f0c860" stroke-width="0.9"/>
<path d="M88.6,291.24 q1.6,0 1.6,2 v3 q0,1.5 -1.6,1.5" fill="#fbdc80" stroke="#efc252" stroke-width="0.8"/>
<rect x="83.5" y="283.04" width="2.8" height="2.8" fill="#2a84d8"/><rect x="86.8" y="286.24" width="2.8" height="2.8" fill="#2a84d8"/>
<line x1="69.5" y1="307.31" x2="77" y2="307.31" stroke="#444" stroke-width="0.8" stroke-dasharray="1,0.6"/>
<rect x="60.8" y="303.61" width="8.4" height="8.2" rx="0.8" fill="#fff" stroke="#1a1a1a" stroke-width="1.5"/>
<path d="M62.6,307.61 h4.8 M65,305.11 v5" stroke="#000" stroke-width="1.4"/>
<path d="M77.2,298.01 h11.5 v15.8 h-11.5z" fill="#fbdf8c"/>
<path d="M77.6,298.01 v15.8" stroke="#f1c75a" stroke-width="1"/>
<path d="M77.2,313.31 h11.8" stroke="#f0c860" stroke-width="0.9"/>
<path d="M88.6,307.01 q1.6,0 1.6,2 v3 q0,1.5 -1.6,1.5" fill="#fbdc80" stroke="#efc252" stroke-width="0.8"/>
<rect x="83.5" y="298.81" width="2.8" height="2.8" fill="#2a84d8"/><rect x="86.8" y="302.01" width="2.8" height="2.8" fill="#2a84d8"/>
<line x1="69.5" y1="323.08" x2="77" y2="323.08" stroke="#444" stroke-width="0.8" stroke-dasharray="1,0.6"/>
<rect x="60.8" y="319.38" width="8.4" height="8.2" rx="0.8" fill="#fff" stroke="#1a1a1a" stroke-width="1.5"/>
<path d="M62.6,323.38 h4.8 M65,320.88 v5" stroke="#000" stroke-width="1.4"/>
<path d="M77.2,313.78 h11.5 v15.8 h-11.5z" fill="#fbdf8c"/>
<path d="M77.6,313.78 v15.8" stroke="#f1c75a" stroke-width="1"/>
<path d="M77.2,329.08 h11.8" stroke="#f0c860" stroke-width="0.9"/>
<path d="M88.6,322.78 q1.6,0 1.6,2 v3 q0,1.5 -1.6,1.5" fill="#fbdc80" stroke="#efc252" stroke-width="0.8"/>
<rect x="83.5" y="314.58" width="2.8" height="2.8" fill="#2a84d8"/><rect x="86.8" y="317.78" width="2.8" height="2.8" fill="#2a84d8"/>
<line x1="69.5" y1="338.84999999999997" x2="77" y2="338.84999999999997" stroke="#444" stroke-width="0.8" stroke-dasharray="1,0.6"/>
<rect x="60.8" y="335.15" width="8.4" height="8.2" rx="0.8" fill="#fff" stroke="#1a1a1a" stroke-width="1.5"/>
<path d="M62.6,339.15 h4.8 M65,336.65 v5" stroke="#000" stroke-width="1.4"/>
<path d="M77.2,329.54999999999995 h11.5 v15.8 h-11.5z" fill="#fbdf8c"/>
<path d="M77.6,329.54999999999995 v15.8" stroke="#f1c75a" stroke-width="1"/>
<path d="M77.2,344.84999999999997 h11.8" stroke="#f0c860" stroke-width="0.9"/>
<path d="M88.6,338.54999999999995 q1.6,0 1.6,2 v3 q0,1.5 -1.6,1.5" fill="#fbdc80" stroke="#efc252" stroke-width="0.8"/>
<rect x="83.5" y="330.34999999999997" width="2.8" height="2.8" fill="#2a84d8"/><rect x="86.8" y="333.54999999999995" width="2.8" height="2.8" fill="#2a84d8"/>
<line x1="69.5" y1="354.62" x2="77" y2="354.62" stroke="#444" stroke-width="0.8" stroke-dasharray="1,0.6"/>
<rect x="60.8" y="350.92" width="8.4" height="8.2" rx="0.8" fill="#fff" stroke="#1a1a1a" stroke-width="1.5"/>
<path d="M62.6,354.92 h4.8 M65,352.42 v5" stroke="#000" stroke-width="1.4"/>
<path d="M77.2,345.32 h11.5 v15.8 h-11.5z" fill="#fbdf8c"/>
<path d="M77.6,345.32 v15.8" stroke="#f1c75a" stroke-width="1"/>
<path d="M77.2,360.62 h11.8" stroke="#f0c860" stroke-width="0.9"/>
<path d="M88.6,354.32 q1.6,0 1.6,2 v3 q0,1.5 -1.6,1.5" fill="#fbdc80" stroke="#efc252" stroke-width="0.8"/>
<rect x="83.5" y="346.12" width="2.8" height="2.8" fill="#2a84d8"/><rect x="86.8" y="349.32" width="2.8" height="2.8" fill="#2a84d8"/>
<line x1="64.5" y1="371.09" x2="77" y2="371.09" stroke="#444" stroke-width="0.9"/>
<path d="M77.6,362.59 h10.5 v15 h-10.5z" fill="#fff" stroke="#8a8a8a" stroke-width="1"/>
<path d="M79.5,365.89h7 M79.5,367.89h7 M79.5,369.89h7 M79.5,371.89h7 M79.5,373.89h7 M79.5,375.89h7" stroke="#777" stroke-width="0.6"/>
<rect x="84.5" y="361.78999999999996" width="2.6" height="2.6" fill="#2a84d8"/><rect x="87" y="364.78999999999996" width="2.6" height="2.6" fill="#2a84d8"/>
<line x1="64.5" y1="386.86" x2="77" y2="386.86" stroke="#444" stroke-width="0.9"/>
<rect x="77" y="380.86" width="13.5" height="10.8" fill="#37a82a"/><path d="M79.2,383.56 h1.5 M82,385.16 h1.5" stroke="#e8ffe0" stroke-width="0.9"/>
<rect x="84.5" y="378.56" width="2.6" height="2.6" fill="#2a84d8"/><rect x="87.6" y="381.36" width="2.6" height="2.6" fill="#2a84d8"/>
<line x1="64.5" y1="402.63" x2="77" y2="402.63" stroke="#444" stroke-width="0.9"/>
<circle cx="83.2" cy="402.53000000000003" r="7.8" fill="#4a4a4a"/><path d="M83.2,402.53000000000003 m-4.5,6.4 a7.8,7.8 0 0 1 6,-14.1z" fill="#f2c94c"/><path d="M78.5,406.93 l4.7,-8.6 4.7,8.6z" fill="#fff"/>
<rect x="85" y="394.53000000000003" width="2.8" height="2.8" fill="#2a84d8"/><rect x="87.6" y="397.33" width="2.8" height="2.8" fill="#2a84d8"/>
<line x1="64.5" y1="418.4" x2="77" y2="418.4" stroke="#444" stroke-width="0.9"/>
<path d="M77.6,415.09999999999997 v10 M77.6,415.09999999999997 h4" stroke="#8a8a8a" stroke-width="1"/><rect x="84.5" y="414.09999999999997" width="2.6" height="2.6" fill="#2a84d8"/><rect x="87" y="416.7" width="2.6" height="2.6" fill="#2a84d8"/>
<rect x="92" y="93.2" width="16" height="323" fill="#f0f0f0"/>
<path d="M96.5,105.3 l3.3,-4 3.3,4" fill="none" stroke="#606060" stroke-width="1.6"/>
<rect x="93.3" y="164.3" width="13.4" height="67" fill="#cdcdcd"/>
<path d="M96.5,405.8 l3.3,4 3.3,-4" fill="none" stroke="#606060" stroke-width="1.6"/>
<rect x="0" y="416.5" width="108" height="16" fill="#f0f0f0"/>
<path d="M10.2,420.8 l-3.4,3.6 3.4,3.6" fill="none" stroke="#555" stroke-width="1.8"/>
<rect x="17" y="416.8" width="29.5" height="14" fill="#cdcdcd"/>
<path d="M80.8,420.8 l3.4,3.6 -3.4,3.6" fill="none" stroke="#555" stroke-width="1.8"/>
<rect x="-1" y="437" width="111" height="19" fill="#fff" stroke="#2a2a2a" stroke-width="1"/>
<rect x="-1" y="436.8" width="111" height="1.6" fill="#333"/>
<rect x="94.2" y="438" width="14.5" height="17.5" fill="#7b7b7b"/>
<path d="M97.5,444.5 h8 l-4,4z" fill="#c8c8c8"/>
<rect x="108.6" y="437" width="1.5" height="19.5" fill="#333"/>
<rect x="-1" y="458.8" width="110" height="5" fill="#fff" stroke="#555" stroke-width="0.9"/>
<polygon points="0.5,482 0.5,469.2 5.3,464.5 74,464.5 74,478.6 70.5,482" fill="#f0f0f0" stroke="#5e626e" stroke-width="1.1"/>
<path d="M7.6,476.2 V466 q0,-1.2 1.2,-1.2 h4.6 l1.8,1.6 h5.2 q0.9,0 0.9,0.9 V476.2 z" fill="none" stroke="#0e2a50" stroke-width="1.1"/><circle cx="12.3" cy="470.4" r="3" fill="#f0f0f0" stroke="#0e2a50" stroke-width="1.1"/><path d="M14.6,472.7 l5,5" stroke="#0e2a50" stroke-width="2.3"/>
<text x="26.8" y="475.2" font-family="Liberation Sans" font-size="11" letter-spacing="-0.2" fill="#1a1a40">Directory</text>
<rect x="76.3" y="465" width="15.5" height="17.6" fill="#f0f0f0" stroke="#5e626e" stroke-width="1"/>
<path d="M85.5,470.5 v7 l-3.5,-3.5z" fill="#000"/>
<rect x="92.8" y="465" width="16" height="17.6" fill="#f0f0f0" stroke="#5e626e" stroke-width="1"/>
<path d="M100,470.5 v7 l3.5,-3.5z" fill="#000"/>
<rect x="80" y="463.5" width="18" height="2" fill="#111"/>
<rect x="108" y="93" width="1.5" height="339" fill="#fafafa"/>
</svg>
<div class="a" style="left:0px;top:74px;font-size:11.6px;color:#1a1a60;letter-spacing:-0.45px">[C:] SYS</div>
<div class="a" style="left:0px;top:440px;font-size:11.3px;color:#1a1a60;letter-spacing:-0.5px">All Files (*.*)</div>
<div class="a" style="left:117px;top:44px;width:1238px;height:1px;background:#fcfcfc"></div>
<div class="a" style="left:117px;top:45px;width:1238px;height:2px;background:#505050"></div>
<div class="a" style="left:117px;top:47px;width:1238px;height:1px;background:#a8a8a8"></div>
<div class="a" style="left:116px;top:46px;width:1.6px;height:441px;background:linear-gradient(90deg,#c8c8c8,#5a5a5a)"></div>
<div class="a" style="left:118px;top:48px;width:30px;height:422px;background:#0000a8"></div>
<div class="a" style="left:148px;top:48px;width:1191px;height:422px;background:#1c1c1c"></div>
<div class="a" style="left:118px;top:48px;width:1221px;height:422px;overflow:hidden">
<div class="a mono" style="left:0;top:2.70px;width:28.3px;text-align:right;font-size:12px;letter-spacing:-0.33px;line-height:14.85px;color:#f0f0f0">48</div>
<div class="a mono" style="left:31.8px;top:2.70px;font-size:12px;letter-spacing:-0.33px;line-height:14.85px"><span style="color:#e8e8e8">    .menuBar add cascade -</span><span style="color:#36cad0">menu</span><span style="color:#e8e8e8"> .menuBar.</span><span style="color:#48d048">file</span><span style="color:#e8e8e8"> -</span><span style="color:#36cad0">label</span><span style="color:#e8e8e8"> </span><span style="color:#cc6acc">&quot;File&quot;</span><span style="color:#e8e8e8"> -underline 0</span></div>
<div class="a mono" style="left:0;top:17.55px;width:28.3px;text-align:right;font-size:12px;letter-spacing:-0.33px;line-height:14.85px;color:#f0f0f0">49</div>
<div class="a mono" style="left:31.8px;top:17.55px;font-size:12px;letter-spacing:-0.33px;line-height:14.85px"><span style="color:#e8e8e8">    </span><span style="color:#36cad0">menu</span><span style="color:#e8e8e8"> .menuBar.</span><span style="color:#48d048">file</span><span style="color:#e8e8e8"> -tearoff 0</span></div>
<div class="a mono" style="left:0;top:32.40px;width:28.3px;text-align:right;font-size:12px;letter-spacing:-0.33px;line-height:14.85px;color:#f0f0f0">50</div>
<div class="a mono" style="left:31.8px;top:32.40px;font-size:12px;letter-spacing:-0.33px;line-height:14.85px"><span style="color:#e8e8e8">    .menuBar.</span><span style="color:#48d048">file</span><span style="color:#e8e8e8"> add command -label</span></div>
<div class="a mono" style="left:0;top:47.25px;width:28.3px;text-align:right;font-size:12px;letter-spacing:-0.33px;line-height:14.85px;color:#f0f0f0">51</div>
<div class="a mono" style="left:31.8px;top:47.25px;font-size:12px;letter-spacing:-0.33px;line-height:14.85px"><span style="color:#e8e8e8">    -underline 0 -accelerator</span></div>
<div class="a mono" style="left:0;top:62.10px;width:28.3px;text-align:right;font-size:12px;letter-spacing:-0.33px;line-height:14.85px;color:#f0f0f0">52</div>
<div class="a mono" style="left:31.8px;top:62.10px;font-size:12px;letter-spacing:-0.33px;line-height:14.85px"><span style="color:#e8e8e8">    .menuBar.</span><span style="color:#48d048">file</span><span style="color:#e8e8e8"> add sep</span></div>
<div class="a mono" style="left:0;top:76.95px;width:28.3px;text-align:right;font-size:12px;letter-spacing:-0.33px;line-height:14.85px;color:#f0f0f0">53</div>
<div class="a mono" style="left:31.8px;top:76.95px;font-size:12px;letter-spacing:-0.33px;line-height:14.85px"><span style="color:#e8e8e8">    .menuBar.</span><span style="color:#48d048">file</span><span style="color:#e8e8e8"> add command -label</span></div>
<div class="a mono" style="left:0;top:91.80px;width:28.3px;text-align:right;font-size:12px;letter-spacing:-0.33px;line-height:14.85px;color:#f0f0f0">54</div>
<div class="a mono" style="left:31.8px;top:91.80px;font-size:12px;letter-spacing:-0.33px;line-height:14.85px"><span style="color:#e8e8e8">    -accelerator </span><span style="color:#cc6acc">&quot;Meta-Q&quot;</span></div>
<div class="a mono" style="left:0;top:106.65px;width:28.3px;text-align:right;font-size:12px;letter-spacing:-0.33px;line-height:14.85px;color:#f0f0f0">55</div>
<div class="a mono" style="left:31.8px;top:106.65px;font-size:12px;letter-spacing:-0.33px;line-height:14.85px"><span style="color:#e8e8e8">    </span><span style="color:#36cad0">bind</span><span style="color:#e8e8e8"> . &lt;F1&gt; tkAboutDialog</span></div>
<div class="a mono" style="left:0;top:121.50px;width:28.3px;text-align:right;font-size:12px;letter-spacing:-0.33px;line-height:14.85px;color:#f0f0f0">56</div>
<div class="a mono" style="left:31.8px;top:121.50px;font-size:12px;letter-spacing:-0.33px;line-height:14.85px"><span style="color:#b8a078">}</span></div>
<div class="a mono" style="left:0;top:136.35px;width:28.3px;text-align:right;font-size:12px;letter-spacing:-0.33px;line-height:14.85px;color:#f0f0f0">57</div>
<div class="a mono" style="left:0;top:151.20px;width:28.3px;text-align:right;font-size:12px;letter-spacing:-0.33px;line-height:14.85px;color:#f0f0f0">58</div>
<div class="a mono" style="left:31.8px;top:151.20px;font-size:12px;letter-spacing:-0.33px;line-height:14.85px"><span style="color:#e8e8e8">. configure -</span><span style="color:#36cad0">menu</span><span style="color:#e8e8e8"> .menuBar</span></div>
<div class="a mono" style="left:0;top:166.05px;width:28.3px;text-align:right;font-size:12px;letter-spacing:-0.33px;line-height:14.85px;color:#f0f0f0">59</div>
<div class="a mono" style="left:0;top:180.90px;width:28.3px;text-align:right;font-size:12px;letter-spacing:-0.33px;line-height:14.85px;color:#f0f0f0">60</div>
<div class="a mono" style="left:31.8px;top:180.90px;font-size:12px;letter-spacing:-0.33px;line-height:14.85px"><span style="color:#36cad0">frame</span><span style="color:#e8e8e8"> .statusBar</span></div>
<div class="a mono" style="left:0;top:195.75px;width:28.3px;text-align:right;font-size:12px;letter-spacing:-0.33px;line-height:14.85px;color:#f0f0f0">61</div>
<div class="a mono" style="left:31.8px;top:195.75px;font-size:12px;letter-spacing:-0.33px;line-height:14.85px"><span style="color:#36cad0">label</span><span style="color:#e8e8e8"> .statusBar.lab -</span><span style="color:#36cad0">text</span><span style="color:#e8e8e8"> &quot;</span></div>
<div class="a mono" style="left:0;top:210.60px;width:28.3px;text-align:right;font-size:12px;letter-spacing:-0.33px;line-height:14.85px;color:#f0f0f0">62</div>
<div class="a mono" style="left:31.8px;top:210.60px;font-size:12px;letter-spacing:-0.33px;line-height:14.85px"><span style="color:#e8e8e8">    -</span><span style="color:#36cad0">font</span><span style="color:#e8e8e8"> </span><span style="color:#e0a050">$widgetFont</span><span style="color:#e8e8e8">(statusBar)</span></div>
<div class="a mono" style="left:0;top:225.45px;width:28.3px;text-align:right;font-size:12px;letter-spacing:-0.33px;line-height:14.85px;color:#f0f0f0">63</div>
<div class="a mono" style="left:31.8px;top:225.45px;font-size:12px;letter-spacing:-0.33px;line-height:14.85px"><span style="color:#36cad0">label</span><span style="color:#e8e8e8"> .statusBar.foo -width 8</span></div>
<div class="a mono" style="left:0;top:240.30px;width:28.3px;text-align:right;font-size:12px;letter-spacing:-0.33px;line-height:14.85px;color:#f0f0f0">64</div>
<div class="a mono" style="left:31.8px;top:240.30px;font-size:12px;letter-spacing:-0.33px;line-height:14.85px"><span style="color:#e8e8e8">    -</span><span style="color:#36cad0">font</span><span style="color:#e8e8e8"> </span><span style="color:#e0a050">$widgetFont</span><span style="color:#e8e8e8">(statusBar)</span></div>
<div class="a mono" style="left:0;top:255.15px;width:28.3px;text-align:right;font-size:12px;letter-spacing:-0.33px;line-height:14.85px;color:#f0f0f0">65</div>
<div class="a mono" style="left:31.8px;top:255.15px;font-size:12px;letter-spacing:-0.33px;line-height:14.85px"><span style="color:#36cad0">pack</span><span style="color:#e8e8e8"> .statusBar.lab -side left</span></div>
<div class="a mono" style="left:0;top:270.00px;width:28.3px;text-align:right;font-size:12px;letter-spacing:-0.33px;line-height:14.85px;color:#f0f0f0">66</div>
<div class="a mono" style="left:31.8px;top:270.00px;font-size:12px;letter-spacing:-0.33px;line-height:14.85px"><span style="color:#36cad0">pack</span><span style="color:#e8e8e8"> .statusBar.foo -side left</span></div>
<div class="a mono" style="left:0;top:284.85px;width:28.3px;text-align:right;font-size:12px;letter-spacing:-0.33px;line-height:14.85px;color:#f0f0f0">67</div>
<div class="a mono" style="left:31.8px;top:284.85px;font-size:12px;letter-spacing:-0.33px;line-height:14.85px"><span style="color:#36cad0">pack</span><span style="color:#e8e8e8"> .statusBar -side bottom</span></div>
<div class="a mono" style="left:0;top:299.70px;width:28.3px;text-align:right;font-size:12px;letter-spacing:-0.33px;line-height:14.85px;color:#f0f0f0">68</div>
<div class="a mono" style="left:0;top:314.55px;width:28.3px;text-align:right;font-size:12px;letter-spacing:-0.33px;line-height:14.85px;color:#f0f0f0">69</div>
<div class="a mono" style="left:31.8px;top:314.55px;font-size:12px;letter-spacing:-0.33px;line-height:14.85px"><span style="color:#e0d64c">set</span><span style="color:#e8e8e8"> textheight 30</span></div>
<div class="a mono" style="left:0;top:329.40px;width:28.3px;text-align:right;font-size:12px;letter-spacing:-0.33px;line-height:14.85px;color:#f0f0f0">70</div>
<div class="a mono" style="left:31.8px;top:329.40px;font-size:12px;letter-spacing:-0.33px;line-height:14.85px"><span style="color:#e0d64c">catch</span><span style="color:#b8a078"> {</span></div>
<div class="a mono" style="left:0;top:344.25px;width:28.3px;text-align:right;font-size:12px;letter-spacing:-0.33px;line-height:14.85px;color:#f0f0f0">71</div>
<div class="a mono" style="left:31.8px;top:344.25px;font-size:12px;letter-spacing:-0.33px;line-height:14.85px"><span style="color:#e8e8e8">    </span><span style="color:#e0d64c">set</span><span style="color:#e8e8e8"> textheight </span><span style="color:#b8a078">[</span><span style="color:#e0d64c">expr</span><span style="color:#b8a078"> {</span></div>
<div class="a mono" style="left:0;top:359.10px;width:28.3px;text-align:right;font-size:12px;letter-spacing:-0.33px;line-height:14.85px;color:#f0f0f0">72</div>
<div class="a mono" style="left:31.8px;top:359.10px;font-size:12px;letter-spacing:-0.33px;line-height:14.85px"><span style="color:#b8a078">    ([</span><span style="color:#36cad0">winfo</span><span style="color:#e8e8e8"> screenheight .</span><span style="color:#b8a078">]</span></div>
<div class="a mono" style="left:0;top:373.95px;width:28.3px;text-align:right;font-size:12px;letter-spacing:-0.33px;line-height:14.85px;color:#f0f0f0">73</div>
<div class="a mono" style="left:31.8px;top:373.95px;font-size:12px;letter-spacing:-0.33px;line-height:14.85px"><span style="color:#b8a078">    [</span><span style="color:#36cad0">font</span><span style="color:#e8e8e8"> metrics </span><span style="color:#e0a050">$widgetFont</span></div>
<div class="a mono" style="left:0;top:388.80px;width:28.3px;text-align:right;font-size:12px;letter-spacing:-0.33px;line-height:14.85px;color:#f0f0f0">74</div>
<div class="a mono" style="left:31.8px;top:388.80px;font-size:12px;letter-spacing:-0.33px;line-height:14.85px"><span style="color:#b8a078">    }]</span></div>
<div class="a mono" style="left:0;top:403.65px;width:28.3px;text-align:right;font-size:12px;letter-spacing:-0.33px;line-height:14.85px;color:#f0f0f0">75</div>
<div class="a mono" style="left:31.8px;top:403.65px;font-size:12px;letter-spacing:-0.33px;line-height:14.85px"><span style="color:#b8a078">}</span></div>
<div class="a mono" style="left:0;top:418.50px;width:28.3px;text-align:right;font-size:12px;letter-spacing:-0.33px;line-height:14.85px;color:#f0f0f0">76</div>
</div>
<svg width="17" height="442" style="position:absolute;left:1338px;top:46px"><rect x="1" y="2" width="16" height="422" fill="#f7f7f7"/><rect x="1.3" y="3" width="15.7" height="6" fill="#f0f0f0"/><rect x="1.3" y="7.5" width="15.7" height="1.5" fill="#7a7a7a"/><rect x="15.8" y="3" width="1.2" height="6" fill="#8a8a8a"/><rect x="1.3" y="3" width="14.5" height="0.8" fill="#c4c4c4"/><rect x="1.3" y="3" width="0.8" height="4.5" fill="#c4c4c4"/><rect x="2.1" y="3.8" width="13.7" height="1" fill="#fff"/><rect x="2.1" y="3.8" width="1" height="3.7" fill="#fff"/><rect x="1.3" y="9.8" width="15.7" height="15.8" fill="#f0f0f0"/><rect x="1.3" y="24.1" width="15.7" height="1.5" fill="#7a7a7a"/><rect x="15.8" y="9.8" width="1.2" height="15.8" fill="#8a8a8a"/><rect x="1.3" y="9.8" width="14.5" height="0.8" fill="#c4c4c4"/><rect x="1.3" y="9.8" width="0.8" height="14.3" fill="#c4c4c4"/><rect x="2.1" y="10.600000000000001" width="13.7" height="1" fill="#fff"/><rect x="2.1" y="10.600000000000001" width="1" height="13.5" fill="#fff"/><path d="M5,19.4 h7.5 l-3.75,-4.3z" fill="#000"/><rect x="1.3" y="68" width="15.7" height="24" fill="#f0f0f0"/><rect x="1.3" y="90.5" width="15.7" height="1.5" fill="#7a7a7a"/><rect x="15.8" y="68" width="1.2" height="24" fill="#8a8a8a"/><rect x="1.3" y="68" width="14.5" height="0.8" fill="#c4c4c4"/><rect x="1.3" y="68" width="0.8" height="22.5" fill="#c4c4c4"/><rect x="2.1" y="68.8" width="13.7" height="1" fill="#fff"/><rect x="2.1" y="68.8" width="1" height="21.7" fill="#fff"/><rect x="1.3" y="408" width="15.7" height="15.6" fill="#f0f0f0"/><rect x="1.3" y="422.1" width="15.7" height="1.5" fill="#7a7a7a"/><rect x="15.8" y="408" width="1.2" height="15.6" fill="#8a8a8a"/><rect x="1.3" y="408" width="14.5" height="0.8" fill="#c4c4c4"/><rect x="1.3" y="408" width="0.8" height="14.1" fill="#c4c4c4"/><rect x="2.1" y="408.8" width="13.7" height="1" fill="#fff"/><rect x="2.1" y="408.8" width="1" height="13.3" fill="#fff"/><path d="M5,414 h7.5 l-3.75,4.3z" fill="#000"/><rect x="1" y="424" width="16" height="17" fill="#f0f0f0"/></svg>
<svg width="1222" height="18" style="position:absolute;left:117px;top:469px"><rect x="1" y="1" width="1221" height="16.5" fill="#f7f7f7"/><rect x="1.3" y="1.2" width="6.5" height="16" fill="#f0f0f0"/><rect x="1.3" y="15.7" width="6.5" height="1.5" fill="#7a7a7a"/><rect x="6.6" y="1.2" width="1.2" height="16" fill="#8a8a8a"/><rect x="1.3" y="1.2" width="5.3" height="0.8" fill="#c4c4c4"/><rect x="1.3" y="1.2" width="0.8" height="14.5" fill="#c4c4c4"/><rect x="2.1" y="2.0" width="4.5" height="1" fill="#fff"/><rect x="2.1" y="2.0" width="1" height="13.7" fill="#fff"/><rect x="8" y="1.2" width="16" height="16" fill="#f0f0f0"/><rect x="8" y="15.7" width="16" height="1.5" fill="#7a7a7a"/><rect x="22.8" y="1.2" width="1.2" height="16" fill="#8a8a8a"/><rect x="8" y="1.2" width="14.8" height="0.8" fill="#c4c4c4"/><rect x="8" y="1.2" width="0.8" height="14.5" fill="#c4c4c4"/><rect x="8.8" y="2.0" width="14" height="1" fill="#fff"/><rect x="8.8" y="2.0" width="1" height="13.7" fill="#fff"/><path d="M18.5,5.5 v7.5 l-4.3,-3.75z" fill="#000"/><rect x="24" y="1.2" width="48" height="16" fill="#f0f0f0"/><rect x="24" y="15.7" width="48" height="1.5" fill="#7a7a7a"/><rect x="70.8" y="1.2" width="1.2" height="16" fill="#8a8a8a"/><rect x="24" y="1.2" width="46.8" height="0.8" fill="#c4c4c4"/><rect x="24" y="1.2" width="0.8" height="14.5" fill="#c4c4c4"/><rect x="24.8" y="2.0" width="46" height="1" fill="#fff"/><rect x="24.8" y="2.0" width="1" height="13.7" fill="#fff"/><rect x="1205.5" y="1.2" width="16.5" height="16" fill="#f0f0f0"/><rect x="1205.5" y="15.7" width="16.5" height="1.5" fill="#7a7a7a"/><rect x="1220.8" y="1.2" width="1.2" height="16" fill="#8a8a8a"/><rect x="1205.5" y="1.2" width="15.3" height="0.8" fill="#c4c4c4"/><rect x="1205.5" y="1.2" width="0.8" height="14.5" fill="#c4c4c4"/><rect x="1206.3" y="2.0" width="14.5" height="1" fill="#fff"/><rect x="1206.3" y="2.0" width="1" height="13.7" fill="#fff"/><path d="M1211.8,5.5 v7.5 l4.3,-3.75z" fill="#000"/></svg>
<div class="a" style="left:0;top:487px;width:1355px;height:1px;background:#c4c4c4"></div>
<div class="a" style="left:0;top:488px;width:1355px;height:1px;background:#fafafa"></div>
<div class="a" style="left:0;top:492px;width:1355px;height:1px;background:#c8c8c8"></div>
<div class="a" style="left:20px;top:495px;width:1335px;height:1.2px;background:#111"></div>
<div class="a" style="left:20px;top:495px;width:1.2px;height:142px;background:#111"></div>
<div class="a" style="left:21.2px;top:496.2px;width:1334px;height:122px;background:#fff"></div>
<svg width="24" height="24" style="position:absolute;left:0;top:494px">
<polygon points="0.5,20.4 0.5,8 5,3.4 18.5,3.4 18.5,15.5 14,20.4" fill="#f0f0f0" stroke="#5e626e" stroke-width="1.05"/>
<path d="M5.4,8.2 l7.2,6.6 M12.6,8.2 l-7.2,6.6" stroke="#000" stroke-width="1.5"/>
</svg>
<div class="a" style="left:21.5px;top:618px;width:1334px;height:17px;background:#f0f0f0"></div>
<div class="a" style="left:38.7px;top:619px;width:681px;height:14px;background:#cdcdcd"></div>
<svg width="1355" height="16" style="position:absolute;left:0;top:618px">
<path d="M32.2,4.2 l-3.6,3.8 3.6,3.8" fill="none" stroke="#444" stroke-width="1.9"/>
<path d="M1343.8,4.2 l3.6,3.8 -3.6,3.8" fill="none" stroke="#444" stroke-width="1.9"/>
</svg>
<div class="a" style="left:20px;top:635px;width:1335px;height:2px;background:#1a1a1a"></div>
<div class="a" style="left:20px;top:637px;width:1px;height:18px;background:#555"></div>
<div class="a" style="left:20px;top:655px;width:1335px;height:1px;background:#555"></div>
<div class="a" style="left:0;top:656px;width:1355px;height:1px;background:#b8b8b8"></div>
<div class="a" style="left:0;top:662.5px;font-size:12px;letter-spacing:-0.5px;color:#1a1a40">Ready</div>
<div class="a" style="left:958.4px;top:660px;width:128.80000000000007px;padding-left:0px;height:12px;border-top:1px solid #a0a0a0;border-left:1px solid #a0a0a0;border-right:1px solid #fff;text-align:center;font-size:12px;letter-spacing:0px;line-height:15px;color:#1a1a90;white-space:nowrap">Ln 1, Ch 1</div>
<div class="a" style="left:1092.2px;top:660px;width:51.0px;padding-left:0px;height:12px;border-top:1px solid #a0a0a0;border-left:1px solid #a0a0a0;border-right:1px solid #fff;text-align:center;font-size:12px;letter-spacing:0px;line-height:15px;color:#1a1a90;white-space:nowrap">400</div>
<div class="a" style="left:1148.3px;top:660px;width:79.10000000000014px;padding-left:0px;height:12px;border-top:1px solid #a0a0a0;border-left:1px solid #a0a0a0;border-right:1px solid #fff;text-align:center;font-size:12px;letter-spacing:0px;line-height:15px;color:#1a1a90;white-space:nowrap">ASCII_WIN</div>
<div class="a" style="left:1233.2px;top:660px;width:29.299999999999955px;padding-left:2px;height:12px;border-top:1px solid #a0a0a0;border-left:1px solid #a0a0a0;border-right:1px solid #fff;text-align:left;font-size:11.5px;letter-spacing:-0.4px;line-height:15px;color:#9a9a9a;white-space:nowrap">READ</div>
<div class="a" style="left:1270.3px;top:660px;width:20.700000000000045px;padding-left:2px;height:12px;border-top:1px solid #a0a0a0;border-left:1px solid #a0a0a0;border-right:1px solid #fff;text-align:left;font-size:11.5px;letter-spacing:-0.4px;line-height:15px;color:#b01818;white-space:nowrap">REC</div>
<div class="a" style="left:1299px;top:660px;width:22.5px;padding-left:2px;height:12px;border-top:1px solid #a0a0a0;border-left:1px solid #a0a0a0;border-right:1px solid #fff;text-align:left;font-size:11.5px;letter-spacing:-0.4px;line-height:15px;color:#38a838;white-space:nowrap">COL</div>
<div class="a" style="left:1329.3px;top:660px;width:36.700000000000045px;padding-left:2px;height:12px;border-top:1px solid #a0a0a0;border-left:1px solid #a0a0a0;border-right:1px solid #fff;text-align:left;font-size:11.5px;letter-spacing:-0.4px;line-height:15px;color:#3838a8;white-space:nowrap">OVR</div>
<div class="a" style="left:342px;top:58px;width:747px;height:529px;background:#fff;box-shadow:0 3px 11px rgba(0,0,0,0.32),0 0 1px rgba(0,0,0,0.5)"></div>
<svg width="749" height="56" style="position:absolute;left:342px;top:58px">
<rect x="10" y="9" width="14" height="11" fill="#3cb432" stroke="#2a9020" stroke-width="0.6"/><path d="M12,11.5 l1.5,1 M14.2,12.5 h1.2" stroke="#fff" stroke-width="0.8"/>
<path d="M629,14.5 h10" stroke="#9a9a9a" stroke-width="1"/>
<rect x="673.5" y="9.7" width="9.5" height="9" fill="none" stroke="#9a9a9a" stroke-width="1"/>
<path d="M719,9.2 l10,10 M729,9.2 l-10,10" stroke="#9a9a9a" stroke-width="1"/>
<rect x="2.6" y="32.3" width="96" height="23" fill="#fff" stroke="#d6d6d6" stroke-width="1"/>
<path d="M636.8,35.6 h3.4 v5.2 h5.2 v3.4 h-5.2 v5.2 h-3.4 v-5.2 h-5.2 v-3.4 h5.2z" transform="translate(1.3,0)" fill="#e4f0fa" stroke="#3a80c8" stroke-width="1.1"/>
<path d="M658.2,39.6 h8 l-4,4.6z" fill="#111"/>
<rect x="673.5" y="35.5" width="13.5" height="13" fill="#b8d4ee" stroke="#3a80c8" stroke-width="1.2"/><path d="M680,38 v8" stroke="#fff" stroke-width="1.4"/>
<path d="M694,39.6 h8 l-4,4.6z" fill="#111"/>
<path d="M709.5,49 v-7.5 l2,-1.5 v-3 q0,-1.8 1.8,-1.8 h1.4 q1.8,0 1.8,1.8 v3 l2,1.5 v7.5z" fill="#d7e8f7" stroke="#3a80c8" stroke-width="1.1"/><circle cx="714" cy="37.5" r="0.8" fill="#fff"/>
<rect x="729.2" y="35.5" width="13.5" height="13" fill="#f0f0f0" stroke="#777" stroke-width="1"/><rect x="738.5" y="36" width="4" height="12" fill="#bbb"/>
</svg>
<div class="a" style="left:371px;top:66px;font-size:12px;color:#9c9c9c">ptshell.exe</div>
<div class="a" style="left:352.8px;top:94.5px;font-size:12px;color:#1a1a1a">&lt;1&gt; ptshell.exe</div>
<div class="a" style="left:342px;top:112px;width:747px;height:459px;background:#0c0c0c"></div>
<div class="a" style="left:342px;top:112px;width:747px;height:16.03px;background:#a9a9a9"></div>
<div class="a" style="left:532.73px;top:523.58px;width:357.62px;height:15.83px;background:#a9a9a9"></div>
<div class="a" style="left:445.31px;top:302.46px;width:31.79px;height:15.33px;background:#0e8a0e"></div>
<div class="a" style="left:802.93px;top:476.59px;width:15.89px;height:15.33px;background:#0e8a0e"></div>
<div class="a" style="left:341.50px;top:143.66px;width:7.15px;height:14.83px;border:1px solid #8a8a8a;border-radius:1px"></div>
<div class="a" style="left:342.00px;top:539.41px;width:15.89px;height:15.83px;background:#a9a9a9"></div>
<div class="a" style="left:342.00px;top:555.24px;width:15.89px;height:15.83px;background:#a9a9a9"></div>
<div class="a" style="left:461.20px;top:539.41px;width:15.89px;height:15.83px;background:#a9a9a9"></div>
<div class="a" style="left:461.20px;top:555.24px;width:15.89px;height:15.83px;background:#a9a9a9"></div>
<div class="a" style="left:580.41px;top:539.41px;width:15.89px;height:15.83px;background:#a9a9a9"></div>
<div class="a" style="left:580.41px;top:555.24px;width:15.89px;height:15.83px;background:#a9a9a9"></div>
<div class="a" style="left:699.62px;top:539.41px;width:15.89px;height:15.83px;background:#a9a9a9"></div>
<div class="a" style="left:699.62px;top:555.24px;width:15.89px;height:15.83px;background:#a9a9a9"></div>
<div class="a" style="left:818.82px;top:539.41px;width:15.89px;height:15.83px;background:#a9a9a9"></div>
<div class="a" style="left:818.82px;top:555.24px;width:15.89px;height:15.83px;background:#a9a9a9"></div>
<div class="a" style="left:938.02px;top:539.41px;width:15.89px;height:15.83px;background:#a9a9a9"></div>
<div class="a" style="left:938.02px;top:555.24px;width:15.89px;height:15.83px;background:#a9a9a9"></div>
<div class="a mono" style="left:342px;top:114.00px;font-size:13.243px;line-height:15.83px;-webkit-text-stroke-width:0.3px"><span style="color:#1c1c1c">  GNU nano 2.5.3                    File: edit.c</span></div>
<div class="a mono" style="left:342px;top:145.66px;font-size:13.243px;line-height:15.83px;-webkit-text-stroke-width:0.3px"><span style="color:#3aa6a6">#include</span><span style="color:#c8bf88"> &lt;windows.h&gt;</span></div>
<div class="a mono" style="left:342px;top:177.32px;font-size:13.243px;line-height:15.83px;-webkit-text-stroke-width:0.3px"><span style="color:#3aa6a6">#define</span><span style="color:#b4b4b4"> </span><span style="color:#c8394a">ID_EDIT</span><span style="color:#b4b4b4"> 1</span></div>
<div class="a mono" style="left:342px;top:193.15px;font-size:13.243px;line-height:15.83px;-webkit-text-stroke-width:0.3px"><span style="color:#3aa6a6">#define</span><span style="color:#b4b4b4"> </span><span style="color:#c8394a">ID_BUTTON</span><span style="color:#b4b4b4"> 2</span></div>
<div class="a mono" style="left:342px;top:224.81px;font-size:13.243px;line-height:15.83px;-webkit-text-stroke-width:0.3px"><span style="color:#c8394a">LRESULT CALLBACK</span><span style="color:#b4b4b4"> WndProc(</span><span style="color:#c8394a">HWND</span><span style="color:#b4b4b4">, </span><span style="color:#c8394a">UINT</span><span style="color:#b4b4b4">, </span><span style="color:#c8394a">WPARAM</span><span style="color:#b4b4b4">, </span><span style="color:#c8394a">LPARAM</span><span style="color:#b4b4b4">);</span></div>
<div class="a mono" style="left:342px;top:256.47px;font-size:13.243px;line-height:15.83px;-webkit-text-stroke-width:0.3px"><span style="color:#2a9a2a">int</span><span style="color:#b4b4b4"> </span><span style="color:#c8394a">WINAPI</span><span style="color:#b4b4b4"> wWinMain(</span><span style="color:#c8394a">HINSTANCE</span><span style="color:#b4b4b4"> hInstance, </span><span style="color:#c8394a">HINSTANCE</span><span style="color:#b4b4b4"> hPrevInstance,</span></div>
<div class="a mono" style="left:342px;top:272.30px;font-size:13.243px;line-height:15.83px;-webkit-text-stroke-width:0.3px"><span style="color:#b4b4b4">                    </span><span style="color:#c8394a">PWSTR</span><span style="color:#b4b4b4"> lpCmdLine, </span><span style="color:#2a9a2a">int</span><span style="color:#b4b4b4"> nCmdShow) {</span></div>
<div class="a mono" style="left:342px;top:303.96px;font-size:13.243px;line-height:15.83px;-webkit-text-stroke-width:0.3px"><span style="color:#b4b4b4">    </span><span style="color:#c8394a">MSG</span><span style="color:#b4b4b4">  msg;</span></div>
<div class="a mono" style="left:342px;top:319.79px;font-size:13.243px;line-height:15.83px;-webkit-text-stroke-width:0.3px"><span style="color:#b4b4b4">    </span><span style="color:#c8394a">WNDCLASSW</span><span style="color:#b4b4b4"> wc = {0};</span></div>
<div class="a mono" style="left:342px;top:335.62px;font-size:13.243px;line-height:15.83px;-webkit-text-stroke-width:0.3px"><span style="color:#b4b4b4">    wc.lpszClassName = L&quot;</span><span style="color:#c8bf88">Edit control</span><span style="color:#b4b4b4">&quot;;</span></div>
<div class="a mono" style="left:342px;top:351.45px;font-size:13.243px;line-height:15.83px;-webkit-text-stroke-width:0.3px"><span style="color:#b4b4b4">    wc.hInstance     = hInstance;</span></div>
<div class="a mono" style="left:342px;top:367.28px;font-size:13.243px;line-height:15.83px;-webkit-text-stroke-width:0.3px"><span style="color:#b4b4b4">    wc.hbrBackground = GetSysColorBrush(</span><span style="color:#c8394a">COLOR_3DFACE</span><span style="color:#b4b4b4">);</span></div>
<div class="a mono" style="left:342px;top:383.11px;font-size:13.243px;line-height:15.83px;-webkit-text-stroke-width:0.3px"><span style="color:#b4b4b4">    wc.lpfnWndProc   = WndProc;</span></div>
<div class="a mono" style="left:342px;top:398.94px;font-size:13.243px;line-height:15.83px;-webkit-text-stroke-width:0.3px"><span style="color:#b4b4b4">    wc.hCursor       = LoadCursor(0, </span><span style="color:#c8394a">IDC_ARROW</span><span style="color:#b4b4b4">);</span></div>
<div class="a mono" style="left:342px;top:430.60px;font-size:13.243px;line-height:15.83px;-webkit-text-stroke-width:0.3px"><span style="color:#b4b4b4">    RegisterClassW(&amp;wc);</span></div>
<div class="a mono" style="left:342px;top:446.43px;font-size:13.243px;line-height:15.83px;-webkit-text-stroke-width:0.3px"><span style="color:#b4b4b4">    CreateWindowW(wc.lpszClassName, L&quot;</span><span style="color:#c8bf88">Edit control</span><span style="color:#b4b4b4">&quot;,</span></div>
<div class="a mono" style="left:342px;top:462.26px;font-size:13.243px;line-height:15.83px;-webkit-text-stroke-width:0.3px"><span style="color:#b4b4b4">                  </span><span style="color:#c8394a">WS_OVERLAPPEDWINDOW</span><span style="color:#b4b4b4"> | </span><span style="color:#c8394a">WS_VISIBLE</span><span style="color:#b4b4b4">,</span></div>
<div class="a mono" style="left:342px;top:478.09px;font-size:13.243px;line-height:15.83px;-webkit-text-stroke-width:0.3px"><span style="color:#b4b4b4">                  220, 220, 280, 200, 0, 0, hInstance, 0);</span></div>
<div class="a mono" style="left:342px;top:509.75px;font-size:13.243px;line-height:15.83px;-webkit-text-stroke-width:0.3px"><span style="color:#b4b4b4">    </span><span style="color:#d4c97e">while</span><span style="color:#b4b4b4"> (GetMessage(&amp;msg, </span><span style="color:#c8394a">NULL</span><span style="color:#b4b4b4">, 0, 0)) {</span></div>
<div class="a mono" style="left:342px;top:525.58px;font-size:13.243px;line-height:15.83px;-webkit-text-stroke-width:0.3px"><span style="color:#b4b4b4">                        </span><span style="color:#1c1c1c">[ Read 73 lines (Converted from DOS format) ]</span></div>
<div class="a mono" style="left:342px;top:541.41px;font-size:13.243px;line-height:15.83px;-webkit-text-stroke-width:0.3px"><span style="color:#3a3a3a">^G</span><span style="color:#bdbdbd"> Get Help    </span><span style="color:#3a3a3a">^O</span><span style="color:#bdbdbd"> Write Out   </span><span style="color:#3a3a3a">^W</span><span style="color:#bdbdbd"> Where Is    </span><span style="color:#3a3a3a">^K</span><span style="color:#bdbdbd"> Cut Text    </span><span style="color:#3a3a3a">^J</span><span style="color:#bdbdbd"> Justify     </span><span style="color:#3a3a3a">^C</span><span style="color:#bdbdbd"> Cur Pos     </span></div>
<div class="a mono" style="left:342px;top:557.24px;font-size:13.243px;line-height:15.83px;-webkit-text-stroke-width:0.3px"><span style="color:#3a3a3a">^X</span><span style="color:#bdbdbd"> Exit        </span><span style="color:#3a3a3a">^R</span><span style="color:#bdbdbd"> Read File   </span><span style="color:#3a3a3a">^\</span><span style="color:#bdbdbd"> Replace     </span><span style="color:#3a3a3a">^U</span><span style="color:#bdbdbd"> Uncut Text  </span><span style="color:#3a3a3a">^T</span><span style="color:#bdbdbd"> To Spell    </span><span style="color:#3a3a3a">^_</span><span style="color:#bdbdbd"> Go To Line  </span></div>
<div class="a" style="left:342px;top:571px;width:747px;height:16px;background:#3a3a3a;border-top:1px solid #6a6a6a;box-sizing:border-box"></div>
<div class="a" style="left:344.2px;top:571.2px;font-size:10.8px;line-height:14px;color:#e0e0e0;white-space:pre">nano.exe:2904</div>
<div class="a" style="left:582.6px;top:571.2px;font-size:10.8px;line-height:14px;color:#d0d0d0;white-space:pre">«</div>
<div class="a" style="left:591px;top:571.2px;font-size:10.8px;line-height:14px;color:#e0e0e0;white-space:pre">[32]</div>
<div class="a" style="left:619px;top:571.2px;font-size:10.8px;line-height:14px;color:#e0e0e0;white-space:pre">1/1</div>
<div class="a" style="left:645.7px;top:571.2px;font-size:10.8px;line-height:14px;color:#e0e0e0;white-space:pre">[+]</div>
<div class="a" style="left:665.3px;top:571.2px;font-size:10.8px;line-height:14px;color:#8a8a8a;white-space:pre">CAPS</div>
<div class="a" style="left:696px;top:571.2px;font-size:10.8px;line-height:14px;color:#8a8a8a;white-space:pre">NUM</div>
<div class="a" style="left:725.6px;top:571.2px;font-size:10.8px;line-height:14px;color:#8a8a8a;white-space:pre">SCRL</div>
<div class="a" style="left:764px;top:571.2px;font-size:10.8px;line-height:14px;color:#e0e0e0;white-space:pre">PRI</div>
<div class="a" style="left:795.2px;top:571.2px;font-size:10.8px;line-height:14px;color:#e0e0e0;white-space:pre">(0,0)-(93,28)</div>
<div class="a" style="left:860.6px;top:571.2px;font-size:10.8px;line-height:14px;color:#e0e0e0;white-space:pre">94x29</div>
<div class="a" style="left:901.8px;top:571.2px;font-size:10.8px;line-height:14px;color:#e0e0e0;white-space:pre">94x29</div>
<div class="a" style="left:947.2px;top:571.2px;font-size:10.8px;line-height:14px;color:#e0e0e0;white-space:pre">0</div>
<div class="a" style="left:967px;top:571.2px;font-size:10.8px;line-height:14px;color:#e0e0e0;white-space:pre">2</div>
<div class="a" style="left:985.6px;top:571.2px;font-size:10.8px;line-height:14px;color:#e0e0e0;white-space:pre">25V</div>
<div class="a" style="left:1015.4px;top:571.2px;font-size:10.8px;line-height:14px;color:#e0e0e0;white-space:pre">8144</div>
<div class="a" style="left:1048px;top:571.2px;font-size:10.8px;line-height:14px;color:#e0e0e0;white-space:pre">100%</div>
<svg width="16" height="16" style="position:absolute;left:1074px;top:571px">
<path d="M1,15 l14,-14 M6,15 l9,-9 M11,15 l4,-4" stroke="#9a9a9a" stroke-width="1"/></svg>
</body></html>
